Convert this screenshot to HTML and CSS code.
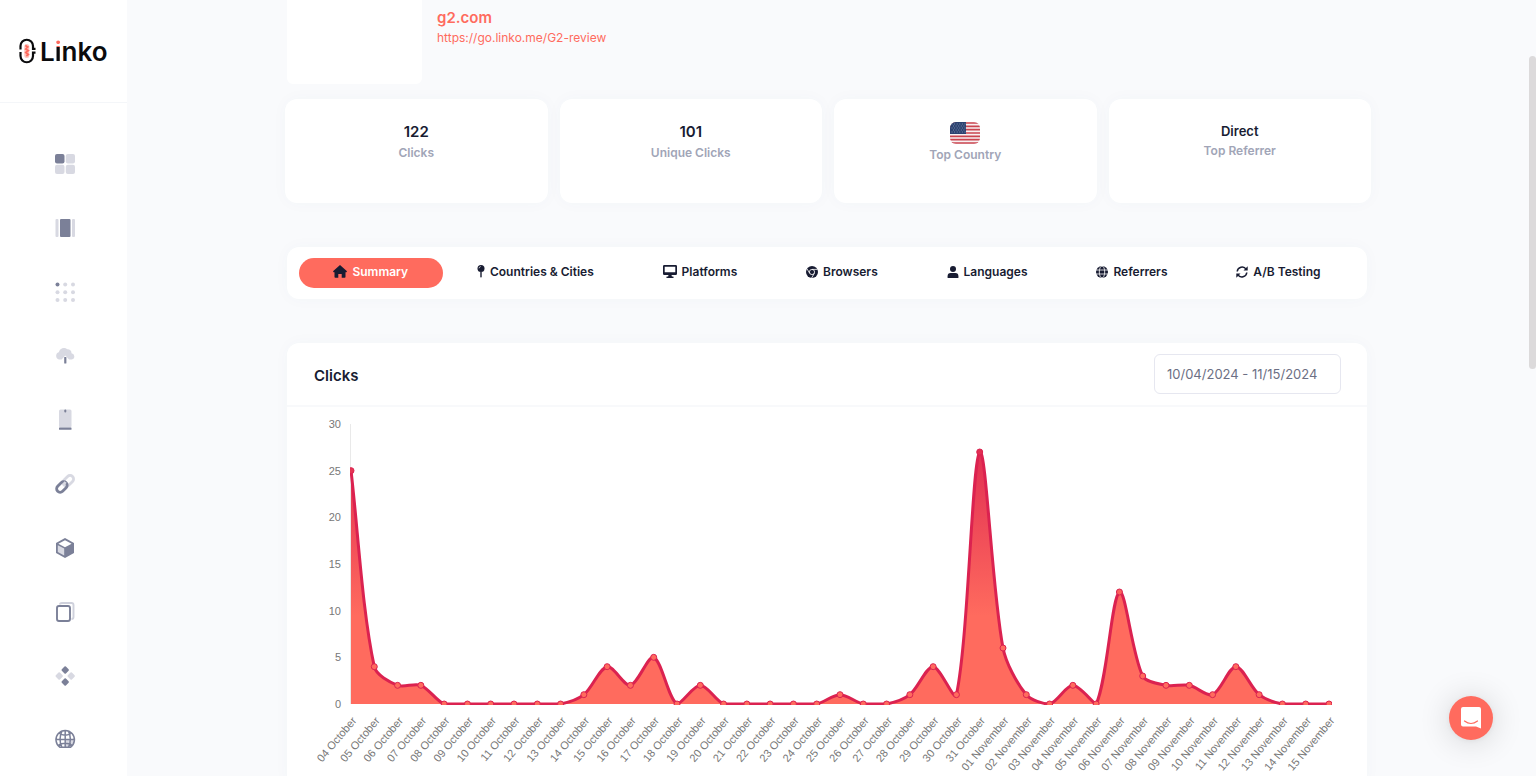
FILE: index.html
```html
<!DOCTYPE html>
<html lang="en">
<head>
<meta charset="utf-8">
<meta name="viewport" content="width=device-width, initial-scale=1">
<title>Linko – Link statistics</title>
<link rel="stylesheet" href="styles.css">
</head>
<body>
<div class="app">
  <aside class="sidebar">
    <a class="logo" href="#" aria-label="Linko">
      <svg class="logo-mark" viewBox="0 0 17 26" aria-hidden="true">
        <path d="M1.500 11.500V8a6 6 0 0 1 12.500 0v2.800h2.500M1.500 14v4a6 6 0 0 0 12.500 0v-3.300h2.500" fill="none" stroke="#0b0b0d" stroke-width="2.200"/>
        <rect x="5.300" y="6" width="5" height="14" rx="2.500" fill="#ffc1ba"/>
        <path d="M6.300 7.500l2.500 1.500-2 2 2.500 1.500-2.500 2 2.500 2-2 1.500" fill="none" stroke="#ff6b5e" stroke-width="1.700"/>
      </svg>
      <span class="logo-text">L<span class="logo-i">i</span>nko</span>
    </a>
    <nav class="side-nav" aria-label="Main">
      <a href="#" aria-label="Dashboard"><svg viewBox="0 0 20 20"><rect width="9.500" height="9.500" rx="2" class="dk"/><rect x="10.800" width="9.200" height="9.500" rx="2" class="lt"/><rect y="10.800" width="9.500" height="9.200" rx="2" class="lt"/><rect x="10.800" y="10.800" width="9.200" height="9.200" rx="2" class="lt"/></svg></a>
      <a href="#" aria-label="Carousel"><svg viewBox="0 0 20 20"><rect x="0.500" y="1" width="3" height="18" rx="1" class="lt"/><rect x="5" y="1" width="10.500" height="18" rx="1" class="dk"/><rect x="17" y="1" width="3" height="18" rx="1" class="lt"/></svg></a>
      <a href="#" aria-label="Apps"><svg viewBox="0 0 20 20"><circle cx="2.500" cy="2.500" r="2" class="dk"/><g class="lt"><circle cx="10.200" cy="2.500" r="2"/><circle cx="18" cy="2.500" r="2"/><circle cx="2.500" cy="10.200" r="2"/><circle cx="10.200" cy="10.200" r="2"/><circle cx="18" cy="10.200" r="2"/><circle cx="2.500" cy="18" r="2"/><circle cx="10.200" cy="18" r="2"/><circle cx="18" cy="18" r="2"/></g></svg></a>
      <a href="#" aria-label="Upload"><svg viewBox="0 0 20 20"><path d="M4 13.500a3.800 3.800 0 0 1-.2-7.300A5.200 5.200 0 0 1 12.300 3.200a3.800 3.800 0 0 1 4.200 4 3.200 3.200 0 0 1 .3 6.300H14l-3.700-4-3.700 4z" class="lt"/><rect x="9.200" y="11" width="2.200" height="6.500" rx="0.500" class="dk"/></svg></a>
      <a href="#" aria-label="Mobile page"><svg viewBox="0 0 20 20"><rect x="4" y="-0.500" width="12.500" height="18" rx="1.500" class="lt"/><rect x="9.300" y="-0.500" width="2" height="3" rx="1" class="dk"/><rect x="4" y="17.500" width="12.500" height="2.200" rx="0.500" class="dk"/></svg></a>
      <a href="#" aria-label="Links"><svg viewBox="0 0 20 20"><g fill="none" stroke-width="2.800"><rect x="-6" y="-3.500" width="12" height="7" rx="3.500" stroke="#d8d9e2" transform="translate(13.300 6.700) rotate(-45)"/><rect x="-6" y="-3.500" width="12" height="7" rx="3.500" stroke="#7b8098" transform="translate(6.900 13) rotate(-45)"/><path d="M8.500 10.500l2-2.500" stroke="#d8d9e2"/></g></svg></a>
      <a href="#" aria-label="Products"><svg viewBox="0 0 20 20"><path d="M10 0l9 5v10l-9 5-9-5V5z" class="dk"/><path d="M10 2.200l6.600 3.600L10 9.300 3.400 5.800z" fill="#fff"/><path d="M2.800 7.200l6.400 3.300v7l-6.400-3.600z" class="lt"/></svg></a>
      <a href="#" aria-label="Pages"><svg viewBox="0 0 20 20"><g fill="none" stroke-width="1.900"><path d="M5 2.500Q5 1 7 1h9.500Q18.500 1 18.500 3v12q0 2-2 2" stroke="#cfd1dc"/><rect x="2" y="4" width="13" height="15" rx="2" stroke="#7b8098"/></g></svg></a>
      <a href="#" aria-label="Integrations"><svg viewBox="0 0 20 20"><g class="dk"><rect x="-2.900" y="-2.900" width="5.800" height="5.800" rx="1" transform="translate(10.200 4) rotate(45)"/><rect x="-2.900" y="-2.900" width="5.800" height="5.800" rx="1" transform="translate(10.200 16) rotate(45)"/></g><g class="lt"><rect x="-2.900" y="-2.900" width="5.800" height="5.800" rx="1" transform="translate(4.200 10) rotate(45)"/><rect x="-2.900" y="-2.900" width="5.800" height="5.800" rx="1" transform="translate(16.200 10) rotate(45)"/></g></svg></a>
      <a href="#" aria-label="Domains"><svg viewBox="0 0 20 20"><path d="M10.200 9.500h9V14l-3 3.500h-6z" class="lt"/><path d="M5 17.300A9.200 9.200 0 1 1 15.400 17.300z M10.200 0v17.500 M1 9.500h18.400 M3.500 3q6.700 4.500 13.400 0 M3 15.500q7.200-4.500 14.400 0 M7 1q-4 8.500 0 16.500 M13.400 1q4 8.500 0 16.500" fill="none" stroke="#7b8098" stroke-width="1.500"/></svg></a>
    </nav>
  </aside>

  <main class="main">
    <div class="container">
      <section class="link-head">
        <div class="thumb"></div>
        <div class="link-info">
          <a class="link-title" href="#">g2.com</a>
          <a class="link-url" href="#">https://go.linko.me/G2-review</a>
        </div>
      </section>

      <section class="stats">
        <div class="stat"><strong class="stat-num">122</strong><span class="stat-label">Clicks</span></div>
        <div class="stat"><strong class="stat-num">101</strong><span class="stat-label">Unique Clicks</span></div>
        <div class="stat">
          <svg class="flag" viewBox="0 0 30 22" role="img" aria-label="United States">
            <rect width="30" height="22" fill="#f8f1f2"/>
            <path d="M0 1h30M0 4.300h30M0 7.700h30M0 11h30M0 14.300h30M0 17.700h30M0 21h30" stroke="#c9444f" stroke-width="1.700"/>
            <rect width="16" height="12" fill="#2c4270"/>
            <path d="M1.500 2h14M3 4h12M1.500 6h14M3 8h12M1.500 10h14" stroke="#8f9dbb" stroke-width="0.800" stroke-dasharray="1 1.600"/>
          </svg>
          <span class="stat-label">Top Country</span>
        </div>
        <div class="stat"><strong class="stat-name">Direct</strong><span class="stat-label">Top Referrer</span></div>
      </section>

      <nav class="tabs" aria-label="Statistics">
        <button class="tab active" type="button"><svg class="i14" viewBox="0 0 14 13"><path d="M7 0l7 6.300-.6.900H12.500v4.800q0 .8-.8.800H8.700V9H5.300v3.800H2.300q-.8 0-.8-.8V7.200H.6L0 6.300z"/></svg>Summary</button>
        <button class="tab" type="button"><svg class="i8" viewBox="0 0 8 13"><circle cx="4" cy="3.500" r="3.500"/><path d="M3.300 7h1.400v4.500L4 13l-.7-1.500z"/><path d="M2 3.300q.2-1.500 1.700-1.800" fill="none" stroke="#fff" stroke-width=".7"/></svg>Countries &amp; Cities</button>
        <button class="tab" type="button"><svg class="i14" viewBox="0 0 14 13"><path fill-rule="evenodd" d="M1.300 0h11.400Q14 0 14 1.300v7.400Q14 10 12.700 10H8.500l.4 1.500h1.100q.7 0 .7.700t-.7.700H4q-.7 0-.7-.7t.7-.7h1.100L5.500 10H1.300Q0 10 0 8.700V1.300Q0 0 1.300 0zM1.700 1.700v5.600h10.600V1.700z"/></svg>Platforms</button>
        <button class="tab" type="button"><svg class="i12" viewBox="0 0 12 12"><circle cx="6" cy="6" r="6"/><g fill="none" stroke="#fff" stroke-width=".8"><circle cx="6" cy="6" r="2.600"/><path d="M6 3.400h5.500M3.700 7.300L1 2.800M8.300 7.300L5.600 12"/></g></svg>Browsers</button>
        <button class="tab" type="button"><svg class="i12" viewBox="0 0 12 12"><circle cx="6" cy="3" r="3"/><path d="M.6 12v-1.800Q.6 7 3.600 7h4.800q3 0 3 3.200V12z"/></svg>Languages</button>
        <button class="tab" type="button"><svg class="i12" viewBox="0 0 12 12"><circle cx="6" cy="6" r="6"/><g fill="none" stroke="#fff" stroke-width=".8"><ellipse cx="6" cy="6" rx="2.700" ry="6"/><path d="M0 4h12M0 8h12"/></g></svg>Referrers</button>
        <button class="tab" type="button"><svg class="i12" viewBox="0 0 12 12"><g fill="none" stroke="currentColor" stroke-width="1.500"><path d="M1.200 5.500A4.900 4.900 0 0 1 10.200 3.300M10.800 6.500A4.900 4.900 0 0 1 1.800 8.700"/></g><path d="M11.700.3v4.200H7.500zM.3 11.700V7.500h4.200z"/></svg>A/B Testing</button>
      </nav>

      <section class="card">
        <header class="card-head">
          <h2 class="card-title" id="clicks-title">Clicks</h2>
          <input class="date-range" type="text" aria-label="Date range" value="10/04/2024 - 11/15/2024">
        </header>
        <svg class="chart" id="chart" viewBox="0 0 1080 380" role="img" aria-labelledby="clicks-title"></svg>
      </section>
    </div>
  </main>
</div>
<div class="scroll-thumb" aria-hidden="true"></div>
<button class="chat" type="button" aria-label="Open chat">
  <svg viewBox="0 0 20 22" aria-hidden="true"><path d="M2 0h16Q20 0 20 2V21.500L15 19.500H2Q0 19.500 0 17.500V2Q0 0 2 0z" fill="#fff"/><path d="M3.500 14q6.500 5 13 0" fill="none" stroke="#ff6b5e" stroke-width="1.200" stroke-linecap="round"/></svg>
</button>
<script src="chart.js"></script>
</body>
</html>
```
FILE: styles.css
```css
* { box-sizing: border-box; }

body {
  margin: 0;
  background: #f9fafc;
  color: #181c32;
  font-family: Inter, "Liberation Sans", sans-serif;
  font-size: 13px;
}

a { color: inherit; text-decoration: none; }
button, input { font: inherit; color: inherit; }

.app { display: flex; height: 100vh; overflow: hidden; }

/* Sidebar */
.sidebar { flex: 0 0 127px; background: #fff; }
.logo {
  display: flex;
  align-items: center;
  gap: 4px;
  height: 103px;
  padding-left: 19px;
  border-bottom: 1px solid #f4f6f9;
}
.logo-mark { width: 17px; height: 26px; }
.logo-text { padding-top: 2px; font-size: 26px; line-height: 32px; font-weight: 600; color: #0b0b0d; }
.logo-i {
  background: linear-gradient(#ff6b5e 11px, #0b0b0d 11px);
  background-clip: text;
  -webkit-background-clip: text;
  color: transparent;
}
.side-nav {
  display: flex;
  flex-direction: column;
  align-items: center;
  gap: 44px;
  padding: 51px 0 0 3px;
}
.side-nav a { height: 20px; }
.side-nav svg { display: block; width: 20px; height: 20px; overflow: visible; }
.dk { fill: #7b8098; }
.lt { fill: #d8d9e2; }

/* Main column */
.main { flex: 1; min-width: 0; padding: 0 33px 0 24px; overflow: hidden; }
.container { max-width: 1080px; margin: 0 auto; }

.link-head { display: flex; gap: 15px; color: #ff6b5e; }
.thumb { width: 135px; height: 84px; background: #fff; border-radius: 0 0 6px 6px; }
.link-info { display: flex; flex-direction: column; align-items: flex-start; padding-top: 8px; }
.link-title { font-size: 15px; line-height: 20px; font-weight: 600; }
.link-url { font-size: 12px; line-height: 20px; }

.stats {
  display: grid;
  grid-template-columns: repeat(4, 1fr);
  gap: 12px;
  margin: 15px -4px 0 -2px;
}
.stat {
  display: flex;
  flex-direction: column;
  align-items: center;
  min-height: 104px;
  padding-top: 22px;
  background: #fff;
  border-radius: 12px;
  box-shadow: 0 0 16px rgba(76, 87, 125, .03);
}
.stat-num { font-size: 15px; line-height: 22px; font-weight: 600; }
.stat-name { font-size: 13px; line-height: 20px; font-weight: 600; }
.stat-label { font-size: 12px; line-height: 20px; font-weight: 600; color: #a1a5b7; }
.flag { display: block; width: 30px; height: 22px; margin: 1px 0; border-radius: 6px; }

.tabs {
  display: flex;
  margin-top: 44px;
  padding: 11px 12px;
  background: #fff;
  border-radius: 12px;
  box-shadow: 0 0 16px rgba(76, 87, 125, .03);
}
.tab {
  display: flex;
  flex: 1 1 auto;
  align-items: center;
  justify-content: center;
  gap: 5px;
  height: 30px;
  padding: 0 0 3px;
  border: 0;
  border-radius: 15px;
  background: none;
  font-size: 12px;
  font-weight: 600;
  white-space: nowrap;
}
.tab svg { fill: #181c32; }
.tab.active { background: #ff6b5e; color: #fff; }
.i14 { width: 14px; height: 13px; }
.i12 { width: 12px; height: 12px; }
.i8 { width: 8px; height: 13px; }

.card {
  margin-top: 44px;
  background: #fff;
  border-radius: 12px;
  box-shadow: 0 0 16px rgba(76, 87, 125, .03);
}
.card-head {
  display: flex;
  align-items: center;
  justify-content: space-between;
  height: 64px;
  padding: 0 26px 0 27px;
  border-bottom: 2px solid #f8f9fb;
}
.card-title { margin: 4px 0 0; font-size: 15px; line-height: 20px; font-weight: 600; }
.date-range {
  width: 187px;
  height: 40px;
  padding: 0 12px;
  border: 1px solid #e6e7f0;
  border-radius: 6px;
  background: #fff;
  color: #6c6f84;
  font-size: 13px;
}
.chart { display: block; width: 100%; font-family: "Liberation Sans", sans-serif; font-size: 11px; }
.chart text { fill: #777; text-anchor: end; }
.axis { stroke: #e9e9e9; stroke-width: 1; }
.line { fill: none; stroke: #db2250; stroke-width: 3; stroke-linejoin: round; }
.dot { fill: url(#fade); stroke: #db2250; stroke-width: 1; }

/* Floating items */
.scroll-thumb {
  position: fixed;
  top: 56px;
  right: 0;
  width: 7px;
  height: 313px;
  border-radius: 4px;
  background: #dcdadb;
}
.chat {
  position: fixed;
  right: 43px;
  bottom: 36px;
  display: grid;
  place-items: center;
  width: 44px;
  height: 44px;
  padding: 0;
  border: 0;
  border-radius: 50%;
  background: #ff6b5e;
  box-shadow: 0 1px 6px rgba(0, 0, 0, .06), 0 2px 32px rgba(0, 0, 0, .16);
}
.chat svg { width: 20px; height: 22px; }
```
FILE: chart.js
```js
const clicks = [
  25, 4, 2, 2, 0, 0, 0, 0, 0, 0, 1, 4, 2, 5, 0, 2, 0, 0, 0, 0, 0, 1, 0, 0, 1, 4, 1, 27,
  6, 1, 0, 2, 0, 12, 3, 2, 2, 1, 4, 1, 0, 0, 0
];
const area = { left: 64, right: 1042, top: 17, bottom: 297 };
const maxValue = 30;
const tension = 0.3;

const points = clicks.map((value, i) => ({
  x: area.left + (area.right - area.left) * i / (clicks.length - 1),
  y: area.bottom - (area.bottom - area.top) * value / maxValue
}));

const clampY = y => Math.min(area.bottom, Math.max(area.top, y));

// Bezier handles before and after each point
const handles = points.map((p, i) => {
  const a = points[i - 1] || p;
  const b = points[i + 1] || p;
  const d0 = Math.hypot(p.x - a.x, p.y - a.y);
  const d1 = Math.hypot(b.x - p.x, b.y - p.y);
  const f0 = tension * d0 / (d0 + d1);
  const f1 = tension * d1 / (d0 + d1);
  return {
    before: [p.x - f0 * (b.x - a.x), clampY(p.y - f0 * (b.y - a.y))],
    after: [p.x + f1 * (b.x - a.x), clampY(p.y + f1 * (b.y - a.y))]
  };
});

let path = `M${points[0].x} ${points[0].y}`;
for (let i = 1; i < points.length; i++) {
  path += `C${handles[i - 1].after} ${handles[i].before} ${points[i].x} ${points[i].y}`;
}

const dateLabel = i => {
  const day = i < 28 ? i + 4 : i - 27;
  return `${String(day).padStart(2, "0")} ${i < 28 ? "October" : "November"}`;
};

let svg = `
  <defs>
    <linearGradient id="fade" gradientUnits="userSpaceOnUse" x1="0" y1="9" x2="0" y2="209">
      <stop offset="0" stop-color="#db2250"/><stop offset="1" stop-color="#ff6b5e"/>
    </linearGradient>
    <clipPath id="plot"><rect x="${area.left - 1}" y="${area.top}" width="${area.right - area.left + 4}" height="${area.bottom - area.top + 1}"/></clipPath>
  </defs>
  <line class="axis" x1="63.5" x2="63.5" y1="${area.top}" y2="${area.bottom}"/>
  <g clip-path="url(#plot)">
    <path d="${path}V${area.bottom}H${area.left}Z" fill="url(#fade)"/>
    <path class="line" d="${path}"/>
    ${points.map(p => `<circle class="dot" cx="${p.x}" cy="${p.y}" r="3"/>`).join("")}
  </g>`;

for (let value = 0; value <= maxValue; value += 5) {
  const y = area.bottom - (area.bottom - area.top) * value / maxValue;
  svg += `<text x="54" y="${y + 4}">${value}</text>`;
}
points.forEach((p, i) => {
  svg += `<text transform="translate(${p.x + 6} 314) rotate(-50)">${dateLabel(i)}</text>`;
});

document.getElementById("chart").innerHTML = svg;
```
